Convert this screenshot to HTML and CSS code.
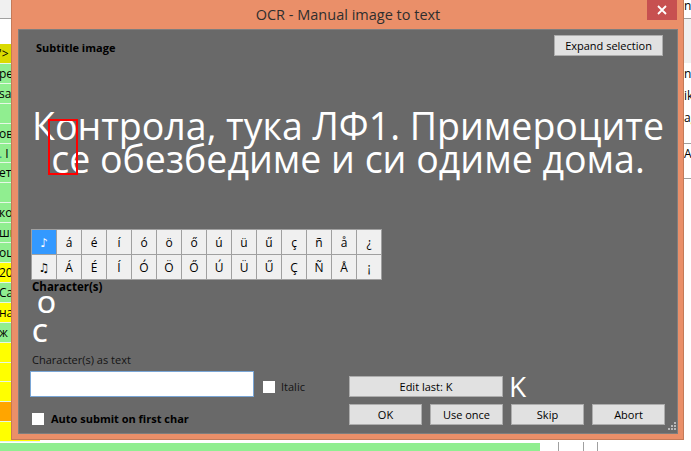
FILE: index.html
```html
<!DOCTYPE html>
<html>
<head>
<meta charset="utf-8">
<title>OCR - Manual image to text</title>
<link rel="stylesheet" href="styles.css">
</head>
<body>
<div class="desk">
  <div class="bg">
    <div class="bg-left">
      <div class="lhead"></div>
      <div class="lblank"></div>
      <div class="lrows">
        <div class="lrow sel">'&gt;</div>
        <div class="lrow g">pe</div>
        <div class="lrow g">sa</div>
        <div class="lrow g"></div>
        <div class="lrow g">ов</div>
        <div class="lrow g"><span class="teal">.</span> I</div>
        <div class="lrow g">ет</div>
        <div class="lrow g"></div>
        <div class="lrow g">ко</div>
        <div class="lrow g">шп</div>
        <div class="lrow g">оц</div>
        <div class="lrow y">20</div>
        <div class="lrow g">Ca</div>
        <div class="lrow y">на</div>
        <div class="lrow g">ж</div>
        <div class="lrow y"></div>
        <div class="lrow y"></div>
        <div class="lrow y"></div>
        <div class="lrow o"></div>
        <div class="lrow y"></div>
      </div>
    </div>
    <div class="bg-mid"></div>
    <div class="bg-right">
      <div class="rhead">n</div>
      <div class="rgray"></div>
      <div class="rtext">nc</div>
      <div class="rtext">ik</div>
      <div class="rtext">a<span class="orange">g</span></div>
      <div class="rline"></div>
      <div class="rtext rA">A</div>
      <div class="rline"></div>
    </div>
    <div class="bg-bottom">
      <div class="bb-green"></div>
      <div class="bb-cell w18"></div>
      <div class="bb-cell w25"></div>
      <div class="bb-cell w14"></div>
      <div class="bb-cell rest"></div>
    </div>
  </div>

  <div class="window">
    <div class="titlebar">
      <span></span>
      <div class="title">OCR - Manual image to text</div>
      <div class="close">
        <svg width="10" height="10" viewBox="0 0 10 10"><path d="M1 1 L9 9 M9 1 L1 9" stroke="#fff" stroke-width="1.8" fill="none"/></svg>
      </div>
    </div>
    <div class="client">
      <div class="head">
        <span class="lbl-bold sub-lbl">Subtitle image</span>
        <button class="btn expand">Expand selection</button>
      </div>
      <div class="image">
        <p class="subtitle">Контрола, тука ЛФ1. Примероците<br>се обезбедиме и си одиме дома.</p>
      </div>
      <div class="selbox"></div>
      <div class="chars">
        <span class="cell on">♪</span><span class="cell">á</span><span class="cell">é</span><span class="cell">í</span><span class="cell">ó</span><span class="cell">ö</span><span class="cell">ő</span><span class="cell">ú</span><span class="cell">ü</span><span class="cell">ű</span><span class="cell">ç</span><span class="cell">ñ</span><span class="cell">å</span><span class="cell">¿</span>
        <span class="cell">♫</span><span class="cell">Á</span><span class="cell">É</span><span class="cell">Í</span><span class="cell">Ó</span><span class="cell">Ö</span><span class="cell">Ő</span><span class="cell">Ú</span><span class="cell">Ü</span><span class="cell">Ű</span><span class="cell">Ç</span><span class="cell">Ñ</span><span class="cell">Å</span><span class="cell">¡</span>
      </div>
      <div class="lbl-bold chars-lbl">Character(s)</div>
      <div class="glyph g-o">O</div>
      <div class="glyph g-c">C</div>
      <div class="bottom">
        <div class="bl">
          <div class="lbl astext">Character(s) as text</div>
          <div class="inrow">
            <div class="input"></div>
            <span class="cb cb-italic"></span>
            <span class="lbl italic">Italic</span>
          </div>
          <div class="autorow">
            <span class="cb"></span>
            <span class="lbl-bold">Auto submit on first char</span>
          </div>
        </div>
        <div class="br">
          <div class="editrow">
            <button class="btn edit">Edit last: K</button>
            <span class="glyph k">K</span>
          </div>
          <div class="btnrow">
            <button class="btn act">OK</button>
            <button class="btn act">Use once</button>
            <button class="btn act">Skip</button>
            <button class="btn act">Abort</button>
          </div>
        </div>
      </div>
      <svg class="grip" width="10" height="10" viewBox="0 0 10 10">
        <rect x="8" y="0" width="2" height="2" fill="#b8b8b8"/>
        <rect x="5" y="3" width="2" height="2" fill="#b8b8b8"/>
        <rect x="8" y="3" width="2" height="2" fill="#b8b8b8"/>
        <rect x="2" y="6" width="2" height="2" fill="#b8b8b8"/>
        <rect x="5" y="6" width="2" height="2" fill="#b8b8b8"/>
        <rect x="8" y="6" width="2" height="2" fill="#b8b8b8"/>
      </svg>
    </div>
  </div>
</div>
</body>
</html>
```
FILE: styles.css
```css
* { box-sizing: border-box; }
body { margin: 0; font-family: "Open Sans", "DejaVu Sans", sans-serif; }

.desk { position: relative; width: 691px; height: 451px; overflow: hidden; background: #fff; }

/* background application */
.bg { display: grid; grid-template-columns: 40px 1fr 7px; grid-template-rows: 442px 9px; height: 100%; }
.bg-left { display: flex; flex-direction: column; font-size: 12px; color: #000; }
.lhead { height: 19px; background: #f0f0f0; border-bottom: 1px solid #a0a0a0; }
.lblank { height: 25px; background: #fff; }
.lrows { flex: 1; display: flex; flex-direction: column; }
.lrow { flex: 1; border-bottom: 1px solid #e6f7e6; line-height: 19px; text-indent: -1px; white-space: nowrap; overflow: hidden; }
.g { background: #90ee90; }
.y { background: #ffff00; }
.sel { background: #dada00; }
.o { background: #ffa500; }
.teal { color: #1a8a8a; }
.bg-right { display: flex; flex-direction: column; font-size: 12px; white-space: nowrap; overflow: hidden; background: #fff; }
.rhead { height: 19px; line-height: 12px; border-bottom: 1px solid #a0a0a0; }
.rgray { height: 44px; background: #f0f0f0; }
.rtext { height: 22px; line-height: 22px; }
.orange { color: #d07000; }
.rline { height: 1px; background: #a0a0a0; margin-top: 14px; }
.rA { height: 20px; line-height: 20px; margin-top: 0; }
.bg-bottom { grid-column: 1 / -1; display: flex; }
.bb-green { width: 540px; background: #90ee90; border-top: 1px solid #fff; }
.bb-cell { background: #fff; border-left: 1px solid #a0a0a0; }
.w18 { width: 18px; border-left: none; }
.w25 { width: 25px; }
.w14 { width: 14px; }
.rest { flex: 1; }

/* dialog window */
.window {
  position: absolute; left: 11px; top: 0; width: 673px; height: 440px;
  background: #ea8f69; border: 1px solid #c47a58; border-top: none;
  display: flex; flex-direction: column; padding: 0 5px 5px 6px;
}
.titlebar { height: 29px; display: grid; grid-template-columns: 1fr auto 1fr; align-items: start; }
.title { font-size: 14.5px; line-height: 29px; color: #2e2e2e; }
.close { justify-self: end; margin-right: 1px; width: 30px; height: 20px; background: #c75050; display: flex; align-items: center; justify-content: center; }

.client {
  position: relative; flex: 1; background: #696969; border: 1px solid #7e7e7e;
  display: flex; flex-direction: column;
}
.lbl { font-size: 11px; line-height: 13px; color: #141414; }
.lbl-bold { font-size: 11px; line-height: 13px; font-weight: 700; color: #000; }
.btn {
  font-family: "Open Sans", sans-serif; font-size: 11px; color: #000;
  background: #e1e1e1; border: 1px solid #adadad; padding: 0; margin: 0; height: 21px; line-height: 19px;
}
.head { display: flex; justify-content: space-between; align-items: flex-start; padding: 5px 14px 0 17px; }
.sub-lbl { margin-top: 6px; }
.expand { width: 109px; }

.image { height: 173px; padding-top: 53px; }
.subtitle { margin: 0; text-align: center; color: #fff; font-size: 37.5px; line-height: 33px; white-space: nowrap; }
.selbox { position: absolute; left: 29px; top: 89px; width: 30px; height: 56px; border: 2px solid #ff0000; }

.chars {
  margin-left: 12px; width: 351px; display: grid; grid-template-columns: repeat(14, 24px); grid-auto-rows: 24px;
  gap: 1px; padding: 1px; background: #a0a0a0;
}
.cell { background: #f0f0f0; display: flex; align-items: center; justify-content: center; font-size: 12px; color: #000; }
.cell.on { background: #3399ff; color: #fff; }
.chars-lbl { margin-left: 13px; line-height: 14px; font-size: 11.5px; }

.glyph { color: #fff; font-weight: 600; }
.g-o { margin-left: 18px; margin-top: -2px; font-size: 24px; line-height: 24px; }
.g-c { margin-left: 13px; margin-top: 4px; font-size: 25px; line-height: 24px; }

.bottom { margin-top: auto; display: flex; align-items: flex-end; padding: 0 0 8px 11px; }
.bl { width: 319px; display: flex; flex-direction: column; }
.astext { margin-left: 2px; margin-bottom: 5px; }
.inrow { display: flex; align-items: flex-start; }
.input { width: 224px; height: 26px; background: #fff; border: 1px solid #7aa6d6; }
.cb { width: 12px; height: 12px; background: #fff; display: inline-block; }
.cb-italic { margin-left: 9px; margin-top: 10px; }
.italic { margin-left: 6px; margin-top: 9px; }
.autorow { display: flex; align-items: center; gap: 7px; margin-top: 15px; margin-left: 2px; height: 13px; }

.br { display: flex; flex-direction: column; }
.editrow { display: flex; align-items: flex-start; }
.edit { width: 154px; }
.k { margin-left: 6px; font-size: 28px; line-height: 21px; font-weight: 400; }
.btnrow { display: flex; gap: 8px; margin-top: 7px; }
.act { width: 73px; }

.grip { position: absolute; right: 1px; bottom: 1px; }
```
